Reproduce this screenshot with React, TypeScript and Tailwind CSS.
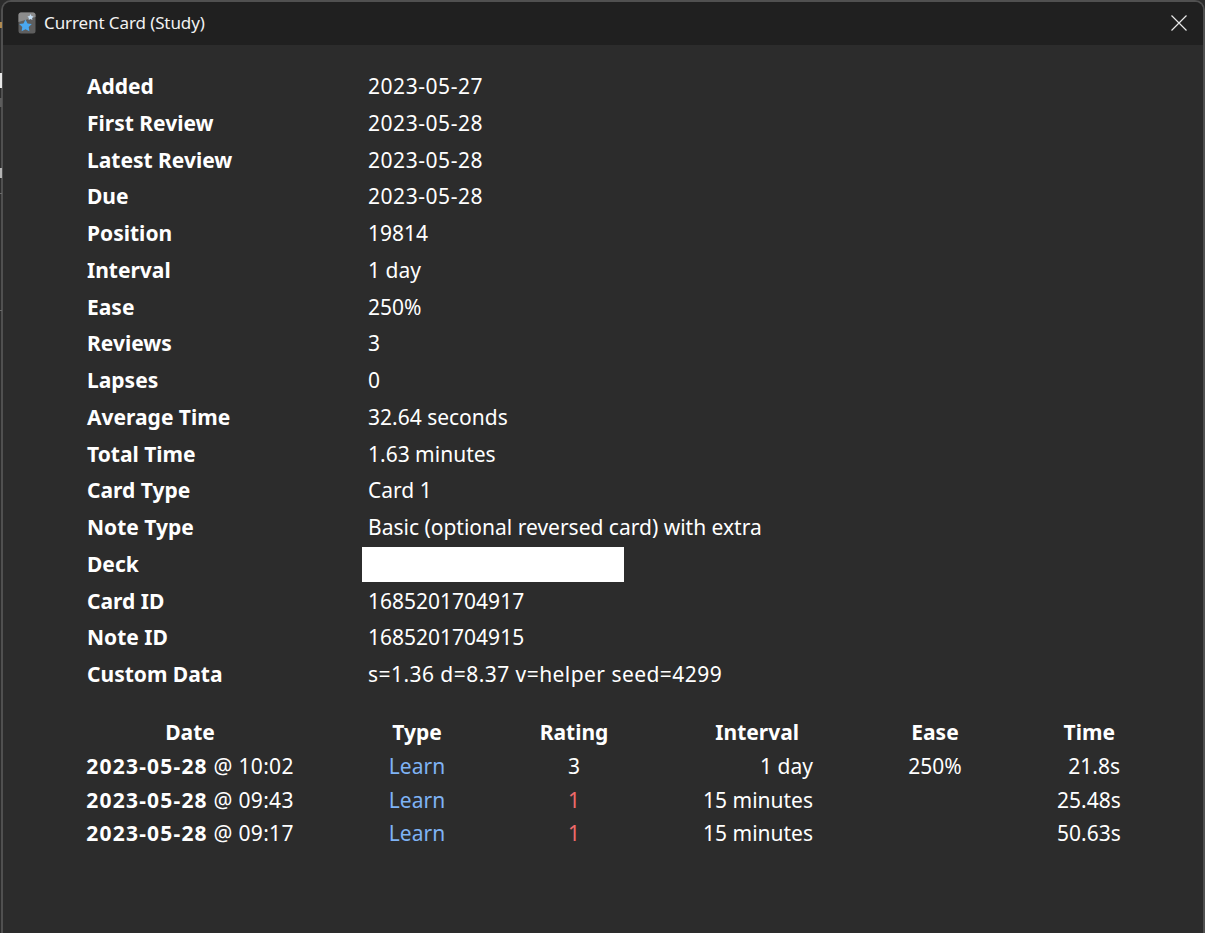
import React from "react";

const stats = [
  ["Added", "2023-05-27", "tracking-[0.55px]"],
  ["First Review", "2023-05-28", "tracking-[0.55px]"],
  ["Latest Review", "2023-05-28", "tracking-[0.55px]"],
  ["Due", "2023-05-28", "tracking-[0.55px]"],
  ["Position", "19814", ""],
  ["Interval", "1 day", ""],
  ["Ease", "250%", ""],
  ["Reviews", "3", ""],
  ["Lapses", "0", ""],
  ["Average Time", "32.64 seconds", ""],
  ["Total Time", "1.63 minutes", ""],
  ["Card Type", "Card 1", ""],
  ["Note Type", "Basic (optional reversed card) with extra", ""],
  ["Deck", "", ""],
  ["Card ID", "1685201704917", ""],
  ["Note ID", "1685201704915", ""],
  ["Custom Data", "s=1.36 d=8.37 v=helper seed=4299", "tracking-[0.45px]"],
];

const revlog = [
  { date: "2023-05-28", time: "10:02", rating: "3", good: true, interval: "1 day", ease: "250%", took: "21.8s" },
  { date: "2023-05-28", time: "09:43", rating: "1", good: false, interval: "15 minutes", ease: "", took: "25.48s" },
  { date: "2023-05-28", time: "09:17", rating: "1", good: false, interval: "15 minutes", ease: "", took: "50.63s" },
];

const cols = "grid grid-cols-[210px_244px_70px_204px_244px_63px]";

function AppIcon() {
  return (
    <svg width="18" height="22" viewBox="0 0 18 22">
      <rect x="0.5" y="0.5" width="17" height="21" rx="2.5" fill="#5e5e5e" />
      <path d="M0.5 10 L17.5 5 V3 a2.5 2.5 0 0 0 -2.5 -2.5 H3 a2.5 2.5 0 0 0 -2.5 2.5 Z" fill="#8c8c8c" />
      <path d="M12.5 2 l1 2 2 .4 -1.4 1.5 .3 2 -1.9 -.9 -1.9 .9 .3 -2 -1.4 -1.5 2 -.4 Z" fill="#c4def4" />
      <path d="M7.5 7.5 l2 3.9 4.3 .6 -3.1 3 .7 4.3 -3.9 -2 -3.9 2 .7 -4.3 -3.1 -3 4.3 -.6 Z" fill="#4aa8f0" />
    </svg>
  );
}

export default function App() {
  return (
    <div className="relative w-[1205px] h-[933px] overflow-hidden bg-[#2c2c2c] pl-[1px] font-['Noto_Sans','Open_Sans',sans-serif] text-white">
      {/* bits of the window behind, showing down the left edge */}
      <span className="absolute left-0 top-[22px] h-[6px] w-[2px] bg-[#b08a50]" />
      <span className="absolute left-0 top-[73px] h-[15px] w-[2px] bg-[#e8e8e8]" />
      <span className="absolute left-0 top-[98px] h-[9px] w-[2px] bg-[#5c5c5c]" />
      <span className="absolute left-0 top-[168px] h-[10px] w-[2px] bg-[#b5b5b5]" />
      <span className="absolute left-0 top-[193px] h-px w-[2px] bg-[#6a6a6a]" />
      <span className="absolute left-0 top-[310px] h-px w-[2px] bg-[#6a6a6a]" />

      <div className="h-full rounded-t-[10px] border-t-2 border-l-2 border-r-2 border-[#505050] bg-[#2c2c2c]">
        <div className="flex h-[43px] items-center justify-between rounded-t-[8px] bg-[#202020] pb-[2px] pl-[15px] pr-[16px]">
          <div className="flex items-center gap-[8px]">
            <AppIcon />
            <span className="text-[17px] tracking-[-0.1px] text-[#f2f2f2]">Current Card (Study)</span>
          </div>
          <svg width="16" height="16" viewBox="0 0 16 16" stroke="#e8e8e8" strokeWidth="1.2" fill="none">
            <path d="M0.5 0.5 L15.5 15.5 M15.5 0.5 L0.5 15.5" />
          </svg>
        </div>

        <div className="pl-[84px] pt-[23.25px]">
          {stats.map(([label, value, spacing]) => (
            <div key={label} className="flex h-[36.75px] items-center text-[21px] leading-none">
              <span className="w-[281px] font-bold">{label}</span>
              {label === "Deck" ? (
                <span className="-ml-[6px] h-[35px] w-[262px] bg-white" />
              ) : (
                <span className={spacing}>{value}</span>
              )}
            </div>
          ))}

          <div className={`${cols} -ml-[2px] mt-[21px] h-[36px] items-center text-[21px] font-bold leading-none`}>
            <span className="text-center">Date</span>
            <span className="text-center">Type</span>
            <span className="text-center">Rating</span>
            <span className="text-right pr-[14px]">Interval</span>
            <span className="text-center">Ease</span>
            <span className="text-right pr-[5px]">Time</span>
          </div>
          {revlog.map((row) => (
            <div key={row.time} className={`${cols} -ml-[2px] h-[33.5px] items-center text-[21px] leading-none`}>
              <span className="text-center whitespace-nowrap tracking-[0.3px]">
                <b className="tracking-[1.2px]">{row.date}</b> @ {row.time}
              </span>
              <span className="text-center text-[#7fb3f5]">Learn</span>
              <span className={`text-center ${row.good ? "text-white" : "text-[#ee6a6a]"}`}>{row.rating}</span>
              <span className="text-right">{row.interval}</span>
              <span className="text-center">{row.ease}</span>
              <span className="text-right">{row.took}</span>
            </div>
          ))}
        </div>
      </div>
    </div>
  );
}
